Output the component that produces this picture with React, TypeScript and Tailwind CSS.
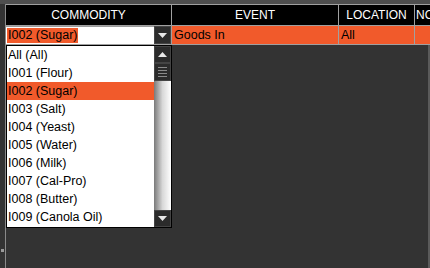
import { ReactNode } from 'react';

const items = [
  'All (All)',
  'I001 (Flour)',
  'I002 (Sugar)',
  'I003 (Salt)',
  'I004 (Yeast)',
  'I005 (Water)',
  'I006 (Milk)',
  'I007 (Cal-Pro)',
  'I008 (Butter)',
  'I009 (Canola Oil)',
];

function Tri({ up = false }: { up?: boolean }) {
  return (
    <svg width="9" height="5" viewBox="0 0 9 5">
      {up ? <polygon points="0,5 9,5 4.5,0" fill="#e8e8e8" /> : <polygon points="0,0 9,0 4.5,5" fill="#e8e8e8" />}
    </svg>
  );
}

function HeaderCell({ children, w }: { children: ReactNode; w: string }) {
  return (
    <div className={`${w} shrink-0 h-[21px] bg-black text-white text-[12px] flex items-center justify-center border-r border-b border-[#a0a0a0] overflow-hidden whitespace-nowrap`}>
      {children}
    </div>
  );
}

function DataCell({ children, w }: { children?: ReactNode; w: string }) {
  return (
    <div className={`${w} shrink-0 h-[19px] bg-[#f15a2b] text-black text-[12.5px] flex items-center pl-[2px] border-r border-b border-[#a0a0a0] overflow-hidden whitespace-nowrap`}>
      {children}
    </div>
  );
}

export default function App() {
  return (
    <div
      className="w-[430px] h-[268px] bg-[#333333] border-t-4 border-[#4e4e4e] flex overflow-hidden"
      style={{ fontFamily: '"Liberation Sans", Arial, sans-serif' }}
    >
      <div className="w-[5px] shrink-0 bg-[#333333] relative">
        <div className="absolute left-[1px] top-[245px] w-[3px] h-[3px] bg-[#9a9a9a]" />
      </div>
      <div className="w-[1px] shrink-0 bg-[#8a8a8a]" />
      <div className="relative flex-1 min-w-0 flex flex-col">
        <div className="flex border-t border-[#a0a0a0]">
          <HeaderCell w="w-[166px]">COMMODITY</HeaderCell>
          <HeaderCell w="w-[167px]">EVENT</HeaderCell>
          <HeaderCell w="w-[76px]">LOCATION</HeaderCell>
          <div className="flex-1 min-w-0 h-[21px] bg-black text-white text-[12px] flex items-center pl-[1px] border-b border-[#a0a0a0] overflow-hidden whitespace-nowrap">
            NO
          </div>
        </div>
        <div className="flex">
          <div className="w-[166px] shrink-0 h-[19px] bg-[#f15a2b] border-r border-b border-[#a0a0a0] flex">
            <div className="w-[148px] h-[18px] bg-white border-t border-[#9a9a9a] flex items-center pl-[1px]">
              <span className="bg-[#f15a2b] text-black text-[12.5px] leading-[15px] px-[1px]">I002 (Sugar)</span>
            </div>
            <div className="w-[17px] h-[18px] bg-[#2c2c2c] border border-[#444] flex items-center justify-center">
              <Tri />
            </div>
          </div>
          <DataCell w="w-[167px]">Goods In</DataCell>
          <DataCell w="w-[76px]">All</DataCell>
          <div className="flex-1 min-w-0 h-[19px] bg-[#f15a2b] border-b border-[#a0a0a0]" />
        </div>
        <div className="flex-1 flex justify-end">
          <div className="w-[2px] bg-[#5a5a5a]" />
        </div>

        <div className="absolute left-0 top-[41px] w-[166px] h-[183px] bg-white border border-black flex">
          <div className="flex-1 flex flex-col">
            {items.map((item, i) => (
              <div
                key={item}
                className={`h-[18px] flex items-center pl-[1px] text-[12.5px] text-black whitespace-nowrap ${i === 2 ? 'bg-[#f15a2b]' : ''}`}
              >
                {item}
              </div>
            ))}
          </div>
          <div className="w-[17px] flex flex-col bg-[#2c2c2c]">
            <div className="h-[17px] bg-[#2b2b2b] border border-[#444] flex items-center justify-center">
              <Tri up />
            </div>
            <div className="h-[18px] bg-[#2b2b2b] border border-[#444] flex flex-col items-center justify-center gap-[2px]">
              <div className="w-[9px] h-[1px] bg-[#8a8a8a]" />
              <div className="w-[9px] h-[1px] bg-[#8a8a8a]" />
              <div className="w-[9px] h-[1px] bg-[#8a8a8a]" />
              <div className="w-[9px] h-[1px] bg-[#8a8a8a]" />
            </div>
            <div className="flex-1 bg-gradient-to-r from-[#7a7a7a] via-[#d8d8d8] to-[#ffffff]" />
            <div className="h-[17px] bg-[#2b2b2b] border border-[#444] flex items-center justify-center">
              <Tri />
            </div>
          </div>
        </div>
      </div>
    </div>
  );
}
